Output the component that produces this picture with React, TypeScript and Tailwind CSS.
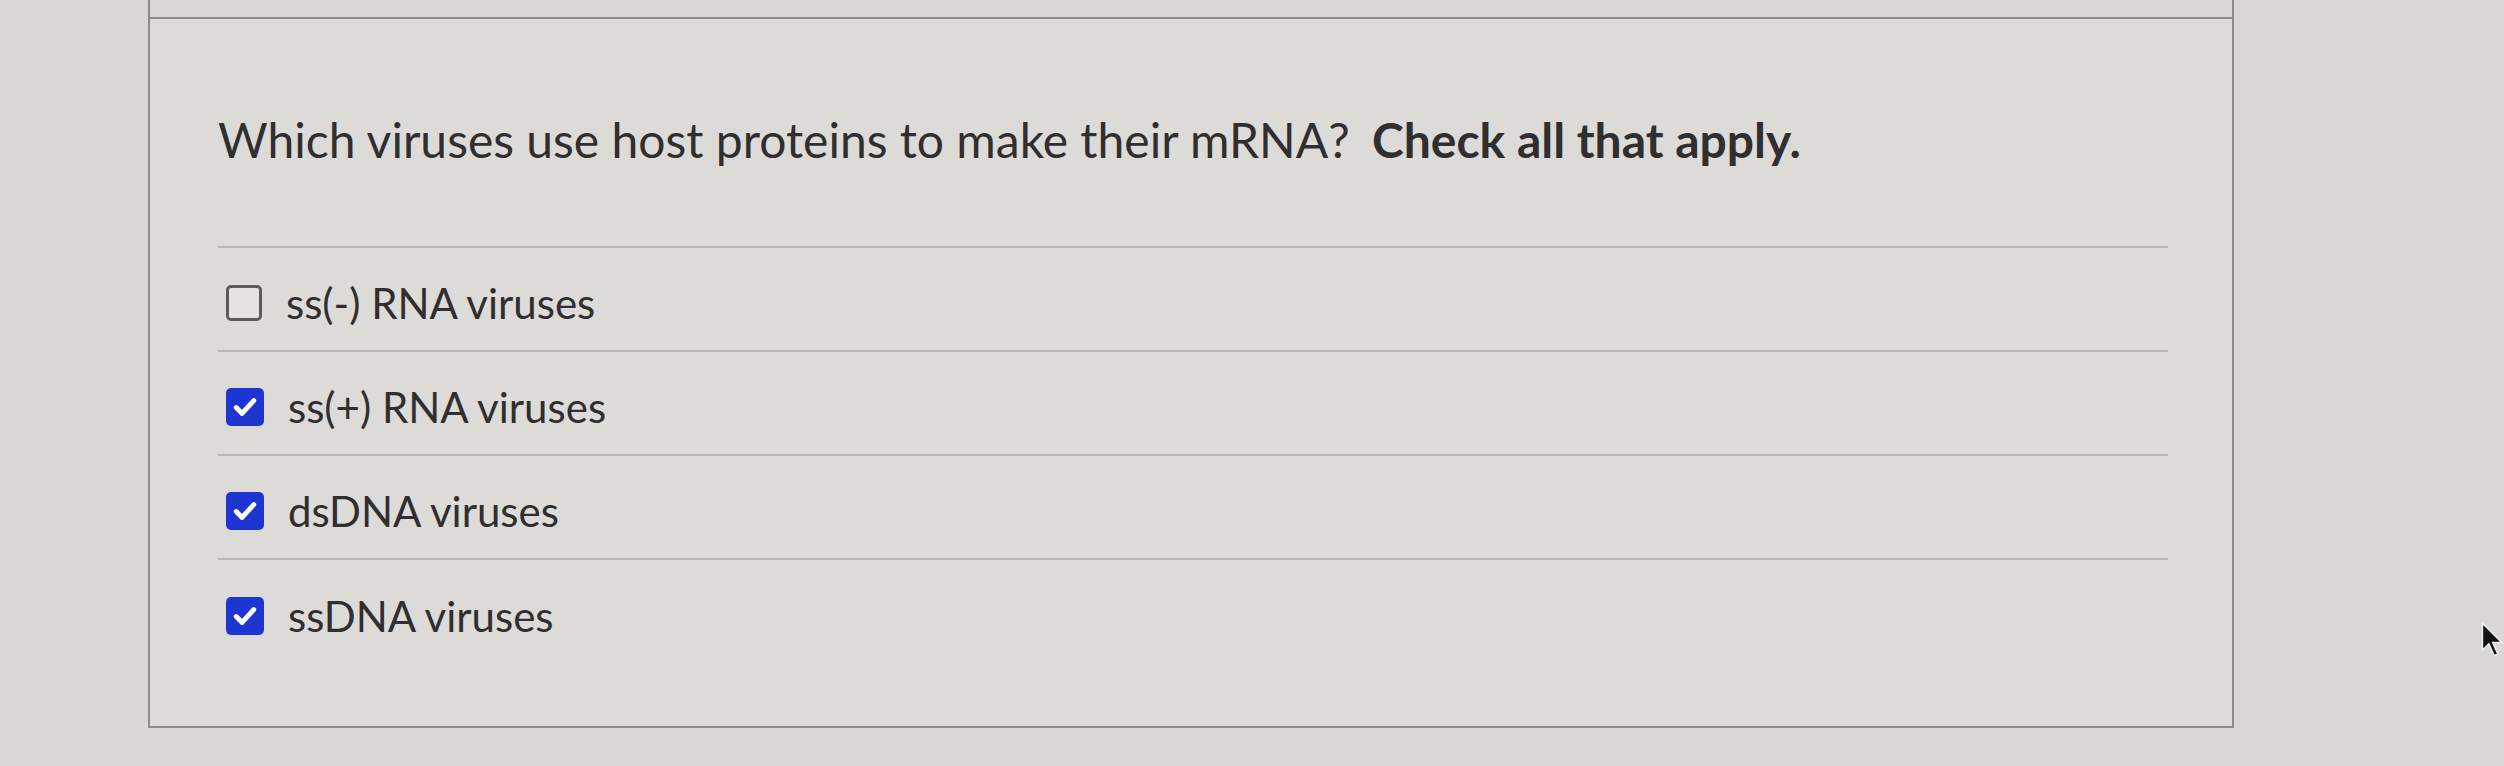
import React from "react";

const OPTIONS = [
  { label: "ss(-) RNA viruses", checked: false },
  { label: "ss(+) RNA viruses", checked: true },
  { label: "dsDNA viruses", checked: true },
  { label: "ssDNA viruses", checked: true },
];

function Box({ checked }: { checked: boolean }) {
  if (!checked) {
    return (
      <span className="w-[36px] h-[36px] shrink-0 rounded-[5px] border-[3px] border-[#5d5c5a] bg-[#e4e2de]" />
    );
  }
  return (
    <span className="w-[38px] h-[38px] shrink-0 rounded-[5px] bg-[#1f35d2] flex items-center justify-center">
      <svg viewBox="0 0 24 24" className="w-[28px] h-[28px]" fill="none">
        <path
          d="M4.5 12.5l5 5L19.5 6.5"
          stroke="#ffffff"
          strokeWidth="4.2"
          strokeLinecap="round"
          strokeLinejoin="round"
        />
      </svg>
    </span>
  );
}

export default function App() {
  return (
    <div
      className="relative w-[2504px] h-[766px] overflow-hidden bg-[#d9d7d3] text-[#2f2e30]"
      style={{ fontFamily: "Lato, 'Open Sans', sans-serif" }}
    >
      <div className="ml-[148px] w-[2086px]">
        {/* tail of the previous question box */}
        <div className="h-[19px] border-x-[2px] border-b-[2px] border-[#8c8b89]" />

        <div className="h-[709px] border-x-[2px] border-b-[2px] border-[#8c8b89] bg-[#dddbd7] pl-[68px] pr-[64px]">
          <p className="pt-[93px] text-[48px] leading-[56px]">
            Which viruses use host proteins to make their mRNA?{" "}
            <span className="font-bold ml-[10px]">Check all that apply.</span>
          </p>

          <div className="mt-[78px] border-t-[2px] border-[#b9b7b3]">
            {OPTIONS.map((o) => (
              <div
                key={o.label}
                className="h-[104px] flex items-center gap-[24px] pl-[8px] pt-[8px] border-b-[2px] border-[#b9b7b3] last:border-b-0"
              >
                <Box checked={o.checked} />
                <span className="text-[42px] leading-none">{o.label}</span>
              </div>
            ))}
          </div>
        </div>
      </div>

      {/* mouse pointer */}
      <svg
        viewBox="0 0 20 28"
        className="absolute left-[2481px] top-[622px] w-[26px] h-[36px]"
      >
        <path
          d="M1 1 L1 22 L6 17 L10 26 L13 25 L9 16 L16 16 Z"
          fill="#111"
          stroke="#eee"
          strokeWidth="1.2"
        />
      </svg>
    </div>
  );
}
